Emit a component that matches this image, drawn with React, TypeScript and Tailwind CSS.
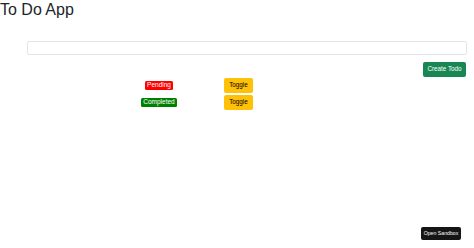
import React from 'react';

type Todo = { id: number; done: boolean };

const todos: Todo[] = [
  { id: 1, done: false },
  { id: 2, done: true },
];

export default function App() {
  return (
    <div className="relative w-full h-[248px] bg-white text-[#212529] font-['Liberation_Sans',Arial,sans-serif] overflow-hidden">
      <h1 className="m-0 text-[16px] leading-[19px] font-normal">To Do App</h1>

      <div className="mt-[22px] ml-[27px] mr-[7px]">
        <input
          type="text"
          className="block w-full h-[14px] border border-[#e2e4e7] rounded-[2px] bg-white outline-none"
        />
      </div>

      <div className="flex justify-end mt-[7px] mr-[8px]">
        <button className="h-[15px] w-[43px] rounded-[2px] bg-[#198754] text-white text-[6.3px] leading-none">
          Create Todo
        </button>
      </div>

      <div className="flex flex-col">
        {todos.map(todo => (
          <div key={todo.id} className="flex items-center h-[17px]">
            <div className="w-[132px]" />
            <div className="w-[54px] flex justify-center">
              {todo.done ? (
                <span className="h-[9px] px-[2px] flex items-center rounded-[1.5px] bg-[#008000] text-white text-[6.5px] leading-none">
                  Completed
                </span>
              ) : (
                <span className="h-[9px] px-[2px] flex items-center rounded-[1.5px] bg-[#ff0000] text-white text-[6.5px] leading-none">
                  Pending
                </span>
              )}
            </div>
            <div className="w-[38px]" />
            <button className="h-[15px] w-[29px] rounded-[2px] bg-[#ffc107] text-black text-[6.3px] leading-none">
              Toggle
            </button>
          </div>
        ))}
      </div>

      <button className="absolute right-[13px] bottom-[8px] h-[13px] w-[40px] rounded-[2px] bg-[#151515] text-white text-[5.2px] leading-none">
        Open Sandbox
      </button>
    </div>
  );
}
